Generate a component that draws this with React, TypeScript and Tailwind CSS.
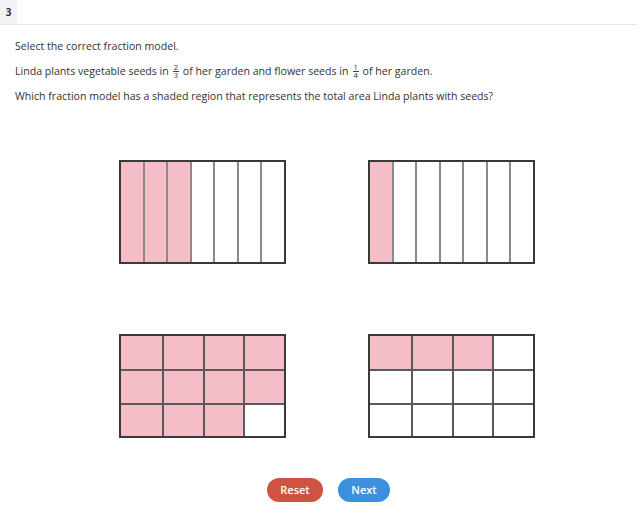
import React from "react";

const PINK = "bg-[#f4bdc7]";

function Frac({ n, d }: { n: string; d: string }) {
  return (
    <span className="mx-[4px] inline-flex flex-col items-center align-middle text-[7.5px] leading-[7.5px]">
      <span>{n}</span>
      <span className="h-px w-[6px] bg-[#444]" />
      <span>{d}</span>
    </span>
  );
}

function StripModel({ shaded }: { shaded: number }) {
  return (
    <div className="flex h-[104px] w-[167px] border-2 border-[#3a3a3a]">
      {Array.from({ length: 7 }).map((_, i) => (
        <div
          key={i}
          className={
            "flex-1 " +
            (i > 0 ? "border-l-2 border-[#8a8a8a] " : "") +
            (i < shaded ? PINK : "bg-white")
          }
        />
      ))}
    </div>
  );
}

function GridModel({ shaded }: { shaded: number }) {
  return (
    <div className="grid h-[104px] w-[167px] grid-cols-4 grid-rows-3 border-2 border-[#3a3a3a]">
      {Array.from({ length: 12 }).map((_, i) => (
        <div
          key={i}
          className={
            (i % 4 > 0 ? "border-l-2 " : "") +
            (i >= 4 ? "border-t-2 " : "") +
            "border-[#5a5a5a] " +
            (i < shaded ? PINK : "bg-white")
          }
        />
      ))}
    </div>
  );
}

export default function App() {
  return (
    <div
      className="h-[513px] w-[637px] bg-white text-[#333]"
      style={{ fontFamily: '"Open Sans", "Noto Sans", sans-serif' }}
    >
      <div className="flex h-[25px] border-b border-[#e6e6e6]">
        <div className="flex w-[17px] items-center justify-center bg-[#f2f2f2] text-[10px] font-bold">
          3
        </div>
      </div>

      <div className="px-[15px] pt-[14px] text-[10.6px]">
        <p className="leading-[15px]">Select the correct fraction model.</p>
        <p className="mt-[8px] flex h-[19px] items-center">
          Linda plants vegetable seeds in <Frac n="2" d="3" /> of her garden and flower seeds in{" "}
          <Frac n="1" d="4" /> of her garden.
        </p>
        <p className="mt-[8px] leading-[15px]">
          Which fraction model has a shaded region that represents the total area Linda plants with seeds?
        </p>
      </div>

      <div className="mt-[56px] grid grid-cols-[167px_167px] gap-x-[82px] gap-y-[70px] pl-[119px]">
        <StripModel shaded={3} />
        <StripModel shaded={1} />
        <GridModel shaded={11} />
        <GridModel shaded={3} />
      </div>

      <div className="mt-[40px] flex gap-[15px] pl-[267px]">
        <button className="h-[24px] w-[56px] rounded-full bg-[#cf5340] text-[11px] font-semibold text-white">
          Reset
        </button>
        <button className="h-[24px] w-[52px] rounded-full bg-[#3d8fe0] text-[11px] font-semibold text-white">
          Next
        </button>
      </div>
    </div>
  );
}
